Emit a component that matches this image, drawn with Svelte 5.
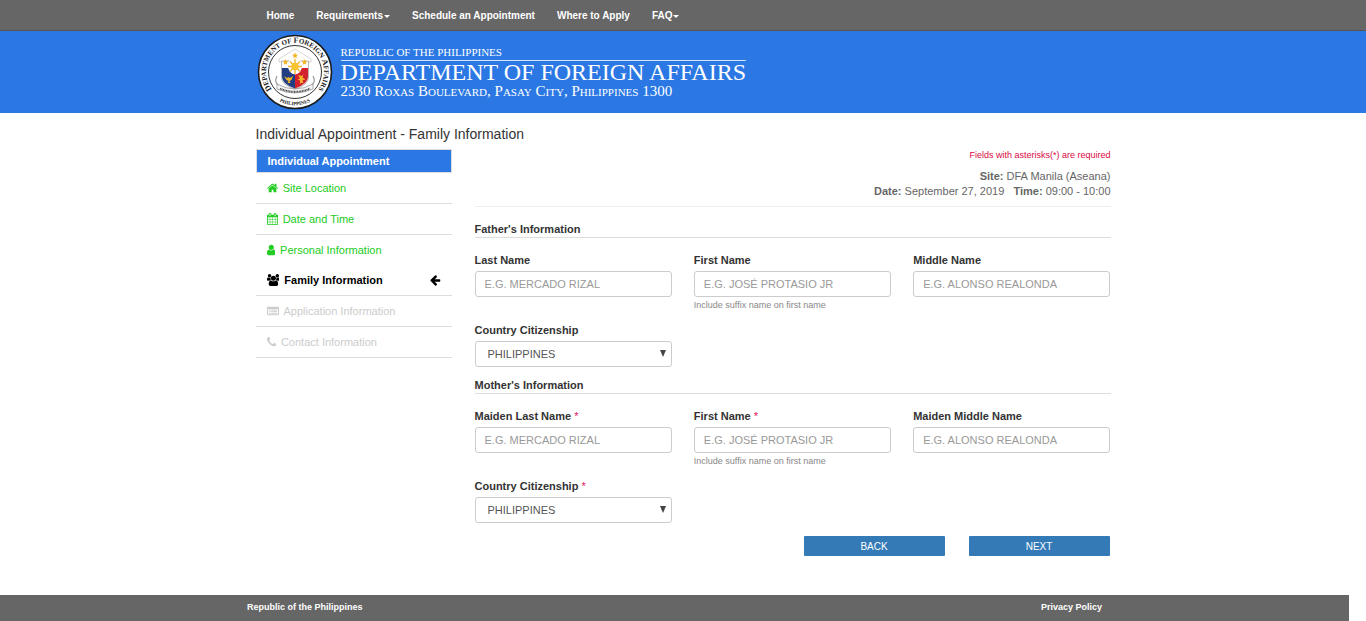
<script lang="ts">
	type Step = { label: string; icon: string; state: 'done' | 'current' | 'pending'; open?: boolean };

	const navLinks = [
		{ label: 'Home', menu: false },
		{ label: 'Requirements', menu: true },
		{ label: 'Schedule an Appointment', menu: false },
		{ label: 'Where to Apply', menu: false },
		{ label: 'FAQ', menu: true }
	];

	const steps: Step[] = [
		{ label: 'Site Location', icon: 'home', state: 'done' },
		{ label: 'Date and Time', icon: 'calendar', state: 'done' },
		{ label: 'Personal Information', icon: 'user', state: 'done', open: true },
		{ label: 'Family Information', icon: 'users', state: 'current' },
		{ label: 'Application Information', icon: 'list', state: 'pending' },
		{ label: 'Contact Information', icon: 'phone', state: 'pending' }
	];

	const icons: Record<string, { x: number; w: number; d: string }> = {
		home: {
			x: 64,
			w: 1664,
			d: 'M1472 992v480q0 26-19 45t-45 19h-384v-384h-256v384h-384q-26 0-45-19t-19-45v-480q0-1 .5-3t.5-3l575-474 575 474q1 2 1 6zm223-69l-62 74q-8 9-21 11h-3q-13 0-21-7l-692-577-692 577q-12 8-24 7-13-2-21-11l-62-74q-8-10-7-23.5t11-21.5l719-599q32-26 76-26t76 26l244 204v-195q0-14 9-23t23-9h192q14 0 23 9t9 23v408l219 182q10 8 11 21.5t-7 23.5z'
		},
		calendar: {
			x: 64,
			w: 1664,
			d: 'M192 1664h288v-288h-288v288zm352 0h320v-288h-320v288zm-352-352h288v-320h-288v320zm352 0h320v-320h-320v320zm-352-384h288v-288h-288v288zm736 736h320v-288h-320v288zm-384-736h320v-288h-320v288zm768 736h288v-288h-288v288zm-384-352h320v-320h-320v320zm-352-864v-288q0-13-9.5-22.5t-22.5-9.5h-64q-13 0-22.5 9.5t-9.5 22.5v288q0 13 9.5 22.5t22.5 9.5h64q13 0 22.5-9.5t9.5-22.5zm736 864h288v-320h-288v320zm-384-384h320v-288h-320v288zm384 0h288v-288h-288v288zm32-480v-288q0-13-9.5-22.5t-22.5-9.5h-64q-13 0-22.5 9.5t-9.5 22.5v288q0 13 9.5 22.5t22.5 9.5h64q13 0 22.5-9.5t9.5-22.5zm384-64v1280q0 52-38 90t-90 38h-1408q-52 0-90-38t-38-90v-1280q0-52 38-90t90-38h128v-96q0-66 47-113t113-47h64q66 0 113 47t47 113v96h384v-96q0-66 47-113t113-47h64q66 0 113 47t47 113v96h128q52 0 90 38t38 90z'
		},
		user: {
			x: 256,
			w: 1280,
			d: 'M1536 1399q0 109-62.5 187t-150.5 78h-854q-88 0-150.5-78t-62.5-187q0-85 8.5-160.5t31.5-152 58.5-131 94-89 134.5-34.5q131 128 313 128t313-128q76 0 134.5 34.5t94 89 58.5 131 31.5 152 8.5 160.5zm-256-887q0 159-112.5 271.5t-271.5 112.5-271.5-112.5-112.5-271.5 112.5-271.5 271.5-112.5 271.5 112.5 112.5 271.5z'
		},
		users: {
			x: 0,
			w: 1920,
			d: 'M593 896q-162 5-265 128h-134q-82 0-138-40.5t-56-118.5q0-353 124-353 6 0 43.5 21t97.5 42.5 119 21.5q67 0 133-23-5 37-5 66 0 139 81 256zm1071 637q0 120-73 189.5t-194 69.5h-874q-121 0-194-69.5t-73-189.5q0-53 3.5-103.5t14-109 26.5-108.5 43-97.5 62-81 85.5-53.5 111.5-20q10 0 43 21.5t73 48 107 48 135 21.5 135-21.5 107-48 73-48 43-21.5q61 0 111.5 20t85.5 53.5 62 81 43 97.5 26.5 108.5 14 109 3.5 103.5zm-1024-1277q0 106-75 181t-181 75-181-75-75-181 75-181 181-75 181 75 75 181zm704 384q0 159-112.5 271.5t-271.5 112.5-271.5-112.5-112.5-271.5 112.5-271.5 271.5-112.5 271.5 112.5 112.5 271.5zm576 225q0 78-56 118.5t-138 40.5h-134q-103-123-265-128 81-117 81-256 0-29-5-66 66 23 133 23 59 0 119-21.5t97.5-42.5 43.5-21q124 0 124 353zm-128-609q0 106-75 181t-181 75-181-75-75-181 75-181 181-75 181 75 75 181z'
		},
		list: {
			x: 0,
			w: 1792,
			d: 'M140 256h1512q140 0 140 140v1000q0 140-140 140h-1512q-140 0-140-140v-1000q0-140 140-140zM150 600v780h1492v-780zM270 690h220v140h-220zM570 690h950v140h-950zM270 920h220v140h-220zM570 920h950v140h-950zM270 1150h220v140h-220zM570 1150h950v140h-950z'
		},
		phone: {
			x: 192,
			w: 1408,
			d: 'M1600 1240q0 27-10 70.5t-21 68.5q-21 50-122 106-94 51-186 51-27 0-53-3.5t-57.5-12.5-47-14.5-55.5-20.5-49-18q-98-35-175-83-127-79-264-216t-216-264q-48-77-83-175-3-9-18-49t-20.5-55.5-14.5-47-12.5-57.5-3.5-53q0-92 51-186 56-101 106-122 25-11 68.5-21t70.5-10q14 0 21 3 18 6 53 76 11 19 30 54t35 63.5 31 53.5q3 4 17.5 25t21.5 35.5 7 28.5q0 20-28.5 50t-62 55-62 53-28.5 46q0 9 5 22.5t8.5 20.5 14 24 11.5 19q76 137 174 235t235 174q2 1 19 11.5t24 14 20.5 8.5 22.5 5q18 0 46-28.5t53-62 55-62 50-28.5q14 0 28.5 7t35.5 21.5 25 17.5q25 15 53.5 31t63.5 35 54 30q70 35 76 53 3 7 3 21z'
		},
		arrow: {
			x: 128,
			w: 1536,
			d: 'M1664 896v128q0 53-32.5 90.5t-84.5 37.5h-704l293 294q38 36 38 90t-38 90l-75 76q-37 37-90 37-52 0-91-37l-651-652q-37-37-37-90 0-52 37-91l651-650q38-38 91-38 52 0 90 38l75 74q38 38 38 91t-38 91l-293 293h704q52 0 84.5 37.5t32.5 90.5z'
		}
	};

	const parents = [
		{
			id: 'father',
			title: "Father's Information",
			required: false,
			fields: [
				{ name: 'last', label: 'Last Name', hint: 'E.G. MERCADO RIZAL', required: false },
				{ name: 'first', label: 'First Name', hint: 'E.G. JOSÉ PROTASIO JR', required: false, help: 'Include suffix name on first name' },
				{ name: 'middle', label: 'Middle Name', hint: 'E.G. ALONSO REALONDA', required: false }
			]
		},
		{
			id: 'mother',
			title: "Mother's Information",
			required: true,
			fields: [
				{ name: 'last', label: 'Maiden Last Name', hint: 'E.G. MERCADO RIZAL', required: true },
				{ name: 'first', label: 'First Name', hint: 'E.G. JOSÉ PROTASIO JR', required: true, help: 'Include suffix name on first name' },
				{ name: 'middle', label: 'Maiden Middle Name', hint: 'E.G. ALONSO REALONDA', required: false }
			]
		}
	];

	let citizenship = $state<Record<string, string>>({ father: 'PHILIPPINES', mother: 'PHILIPPINES' });
</script>

{#snippet icon(name: string)}
	<svg class="icon {name}" viewBox="{icons[name].x} 0 {icons[name].w} 1792" aria-hidden="true">
		<path d={icons[name].d} fill="currentColor" fill-rule={name === 'list' ? 'evenodd' : 'nonzero'} />
	</svg>
{/snippet}

<nav class="navbar">
	<div class="container nav-links">
		{#each navLinks as link}
			<a href="#nav">{link.label}{#if link.menu}<span class="caret"></span>{/if}</a>
		{/each}
	</div>
</nav>

<header class="banner">
	<div class="container brand">
		<svg class="seal" viewBox="0 0 76 76" role="img" aria-label="Department of Foreign Affairs seal">
			<defs>
				<path id="arc-top" d="M15 55.500A29 29 0 1 1 61 55.500" />
				<path id="arc-bottom" d="M16 63A33.500 33.500 0 0 0 60 63" />
			</defs>
			<circle cx="38" cy="38" r="36.5" fill="#fff" stroke="#1b1b1b" stroke-width="1.6" />
			<circle cx="38" cy="38" r="26.5" fill="#fff" stroke="#333" stroke-width="1" />
			<text class="seal-text"><textPath href="#arc-top" startOffset="50%" text-anchor="middle"><tspan font-size="8">D</tspan>EPARTMENT OF <tspan font-size="8">F</tspan>OREIGN <tspan font-size="8">A</tspan>FFAIRS</textPath></text>
			<text class="seal-text small"><textPath href="#arc-bottom" startOffset="50%" text-anchor="middle">PHILIPPINES</textPath></text>
			<path d="M38 15L54 25V28H22V25Z" fill="#fff" stroke="#bbb" stroke-width=".6" />
			<path d="M24.500 27H51.500V43Q51.500 51 38 55Q24.500 51 24.500 43Z" fill="#fff" stroke="#999" stroke-width=".7" />
			<path d="M25 34H38V54.500Q25 50 25 43Z" fill="#213d83" />
			<path d="M38 34H51V43Q51 50 38 54.500Z" fill="#d3212d" />
			<ellipse cx="38" cy="32" rx="7" ry="8.500" fill="#fff" />
			<g stroke="#f3b62b" stroke-width="1.400">
				<path d="M38 25V40M31 32.500H45M33 27.500L43 37.500M43 27.500L33 37.500" />
			</g>
			<circle cx="38" cy="32.500" r="3.800" fill="#f7c531" />
			<g fill="#f3b62b">
				<path d="M38 18.500l.9 1.900 2 .3-1.500 1.500.4 2.100-1.800-1-1.800 1 .4-2.100-1.500-1.500 2-.3z" />
				<path d="M28.500 25l.9 1.900 2 .3-1.500 1.500.4 2.100-1.800-1-1.800 1 .4-2.100-1.500-1.500 2-.3z" />
				<path d="M47.500 25l.9 1.900 2 .3-1.500 1.500.4 2.100-1.800-1-1.800 1 .4-2.100-1.500-1.500 2-.3z" />
				<path d="M27 42l3 2 1.500-1 1.500 1 3-2-1.500 4-2 1 1 2h-3l1-2-2-1z" />
				<path d="M41 41l3.500 1 2-1.500-1 3 3 2-3 .5 1 3.500-2-1-1.500 1.500v-3.500l-2.500-1 2.500-1z" />
			</g>
			<path d="M20 42Q17 47 21 51L26 55M56 42Q59 47 55 51L50 55" fill="none" stroke="#999" stroke-width="1.200" />
			<path d="M20 50Q38 60 56 50V55Q38 63 20 55Z" fill="#f7f7f7" stroke="#777" stroke-width=".6" />
			<path d="M23 54.500Q38 61 53 54.500" fill="none" stroke="#444" stroke-width="1.800" stroke-dasharray="1 .6" />
		</svg>
		<div class="brand-text">
			<div class="republic">REPUBLIC OF THE PHILIPPINES</div>
			<div class="department">DEPARTMENT OF FOREIGN AFFAIRS</div>
			<div class="address">2330 Roxas Boulevard, Pasay City, Philippines 1300</div>
		</div>
	</div>
</header>

<main class="container">
	<h1>Individual Appointment - Family Information</h1>
	<div class="columns">
		<aside>
			<h2>Individual Appointment</h2>
			<ul>
				{#each steps as step}
					<li class={step.state} class:open={step.open}>
						<a href="#step">{@render icon(step.icon)}{step.label}</a>
						{#if step.state === 'current'}{@render icon('arrow')}{/if}
					</li>
				{/each}
			</ul>
		</aside>

		<form onsubmit={(e) => e.preventDefault()}>
			<div class="summary">
				<p class="notice">Fields with asterisks(*) are required</p>
				<p><b>Site:</b> DFA Manila (Aseana)</p>
				<p><b>Date:</b> September 27, 2019 &nbsp; <b>Time:</b> 09:00 - 10:00</p>
			</div>

			{#each parents as parent}
				<section>
					<h3>{parent.title}</h3>
					<div class="fields">
						{#each parent.fields as field}
							<div class="field">
								<label for="{parent.id}-{field.name}">
									{field.label}
									{#if field.required}<span class="required">*</span>{/if}
								</label>
								<input id="{parent.id}-{field.name}" type="text" placeholder={field.hint} />
								{#if field.help}<small>{field.help}</small>{/if}
							</div>
						{/each}
						<div class="field">
							<label for="{parent.id}-country">
								Country Citizenship
								{#if parent.required}<span class="required">*</span>{/if}
							</label>
							<div class="select">
								<select id="{parent.id}-country" bind:value={citizenship[parent.id]}>
									<option>PHILIPPINES</option>
								</select>
								<svg viewBox="0 0 6 7" aria-hidden="true"><path d="M0 0H6L3 7Z" fill="#444" /></svg>
							</div>
						</div>
					</div>
				</section>
			{/each}

			<div class="actions">
				<button type="button">BACK</button>
				<button type="submit">NEXT</button>
			</div>
		</form>
	</div>
</main>

<footer>
	<div class="container">
		<span>Republic of the Philippines</span>
		<a href="#privacy">Privacy Policy</a>
	</div>
</footer>

<style>
	:global(body) {
		background: #fff;
		color: #333;
		font-family: 'Liberation Sans', Arial, sans-serif;
		font-size: 11px;
		line-height: 15px;
		overflow-x: hidden;
	}

	a {
		color: inherit;
		text-decoration: none;
	}

	h1,
	h2,
	h3,
	p,
	ul {
		margin: 0;
		padding: 0;
	}

	.container {
		box-sizing: border-box;
		max-width: 855px;
		margin: 0 auto;
	}

	.navbar {
		background: #666;
		border-bottom: 1px solid #555;
		color: #fff;
		font-size: 10px;
		font-weight: bold;
	}

	.nav-links {
		display: flex;
		gap: 22px;
		padding: 8px 11px 7px;
	}

	.caret {
		display: inline-block;
		margin-left: 1px;
		border: 3px solid transparent;
		border-top-color: #fff;
		border-bottom: 0;
		vertical-align: middle;
	}

	.banner {
		background: #2b78e4;
		color: #fff;
	}

	.brand {
		display: flex;
		gap: 8px;
		padding: 3px 0 3px 1px;
	}

	.seal {
		width: 76px;
		height: 76px;
	}

	.seal-text {
		font-family: 'Liberation Serif', serif;
		font-size: 7px;
		font-weight: bold;
		fill: #222;
	}

	.seal-text.small {
		font-size: 5px;
	}

	.brand-text {
		font-family: 'Liberation Serif', serif;
		padding-top: 11px;
		white-space: nowrap;
	}

	.republic {
		font-size: 11px;
		line-height: 15px;
		border-bottom: 1px solid #d5e4fa;
	}

	.department {
		font-size: 24px;
		line-height: 23px;
	}

	.address {
		font-size: 15px;
		font-variant: small-caps;
		line-height: 14px;
	}

	h1 {
		padding: 11px 0 5px;
		font-size: 14px;
		font-weight: normal;
		line-height: 20px;
	}

	.columns {
		display: grid;
		grid-template-columns: 196px 1fr;
		gap: 23px;
	}

	h2 {
		padding: 4px 11px;
		border: 1px solid #ddd;
		background: #2b78e4;
		color: #fff;
		font-size: 11px;
		line-height: 14px;
	}

	ul {
		list-style: none;
	}

	li {
		display: flex;
		align-items: center;
		justify-content: space-between;
		height: 30px;
		padding: 0 11px;
		border-bottom: 1px solid #ddd;
	}

	li.open {
		border-bottom: 0;
	}

	li a {
		display: flex;
		align-items: center;
		gap: 5px;
	}

	.done {
		color: #2c2;
	}

	.current {
		color: #000;
		font-weight: bold;
	}

	.pending {
		color: #ccc;
	}

	.icon {
		height: 12px;
	}

	.summary {
		padding-bottom: 7px;
		border-bottom: 1px solid #eee;
		color: #666;
		text-align: right;
	}

	.notice {
		padding-bottom: 8px;
		color: #d9083f;
		font-size: 9px;
		line-height: 12px;
	}

	h3 {
		border-bottom: 1px solid #ddd;
		font-size: 11px;
		line-height: 15px;
	}

	section:first-of-type {
		padding-top: 15px;
	}

	section + section {
		padding-top: 11px;
	}

	.fields {
		display: grid;
		grid-template-columns: repeat(3, 1fr);
		gap: 12px 22px;
		padding-top: 15px;
	}

	label {
		display: block;
		padding-bottom: 3px;
		font-weight: bold;
	}

	.required {
		color: #e0115f;
		font-weight: normal;
	}

	input,
	select {
		box-sizing: border-box;
		display: block;
		width: 100%;
		height: 26px;
		padding: 0 9px;
		border: 1px solid #ccc;
		border-radius: 3px;
		background: #fff;
		color: #555;
		font: inherit;
	}

	input::placeholder {
		color: #999;
		opacity: 1;
	}

	small {
		display: block;
		padding-top: 2px;
		color: #888;
		font-size: 9px;
		line-height: 12px;
	}

	.select {
		position: relative;
	}

	select {
		appearance: none;
		padding: 0 12px;
	}

	.select svg {
		position: absolute;
		top: 9px;
		right: 6px;
		width: 6px;
		height: 7px;
		pointer-events: none;
	}

	.actions {
		display: flex;
		justify-content: flex-end;
		gap: 24px;
		padding: 13px 1px 39px;
	}

	button {
		width: 141px;
		height: 20px;
		padding: 0;
		border: 0;
		border-radius: 1px;
		background: #337ab7;
		color: #fff;
		font: inherit;
		font-size: 10px;
	}

	footer {
		margin-right: 17px;
		background: #666;
		color: #fff;
		font-size: 9px;
		font-weight: bold;
	}

	footer .container {
		display: flex;
		justify-content: space-between;
		padding: 5px 0 6px;
	}
</style>
